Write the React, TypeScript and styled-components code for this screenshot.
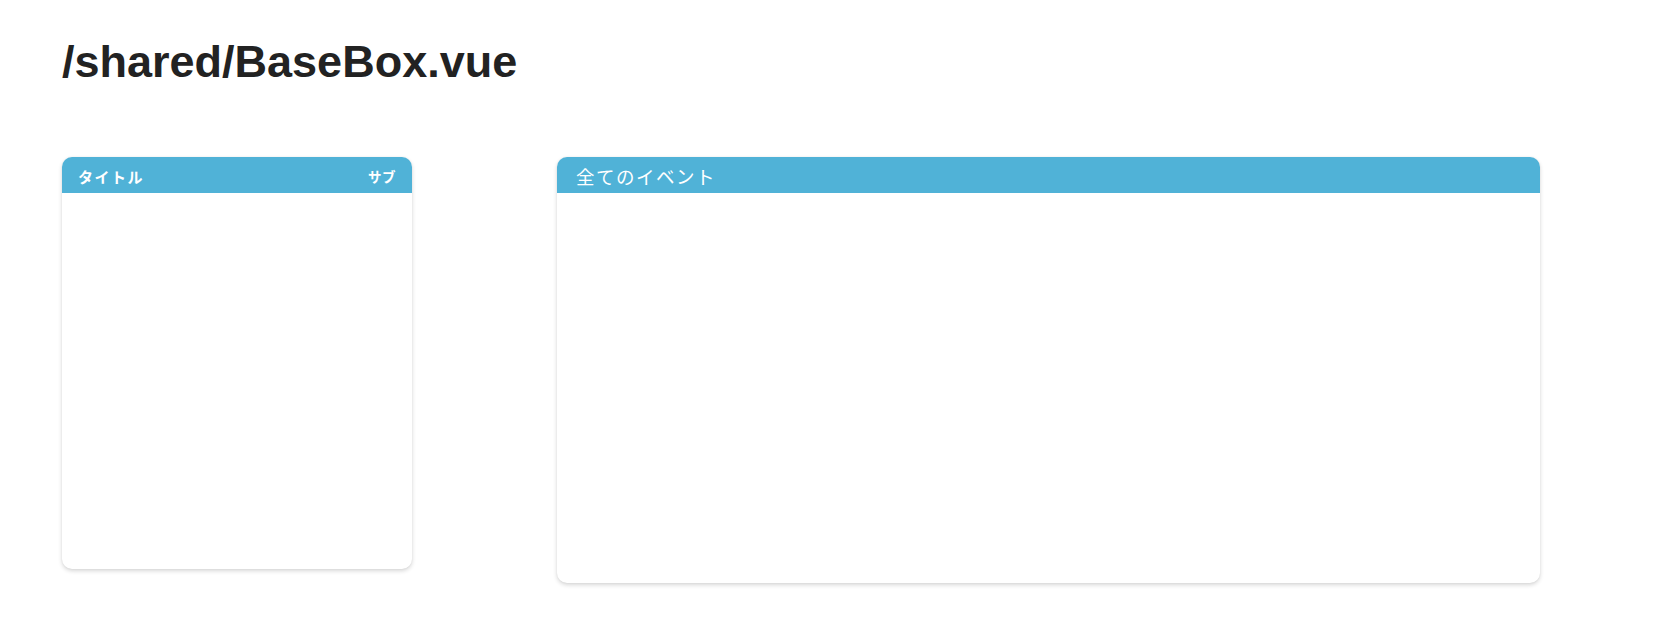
import React from "react";
import styled, { createGlobalStyle } from "styled-components";

const GlobalStyle = createGlobalStyle`
  html, body {
    margin: 0;
    padding: 0;
    background: #ffffff;
  }
  body {
    font-family: "Liberation Sans", "Noto Sans CJK JP", Arial, sans-serif;
  }
`;

const Page = styled.main`
  padding: 36px 62px 40px 62px;
`;

const Title = styled.h1`
  margin: 0;
  font-family: "Liberation Sans", Arial, sans-serif;
  font-size: 45px;
  font-weight: 700;
  color: #222222;
  line-height: normal;
`;

const Row = styled.div`
  display: flex;
  align-items: flex-start;
  gap: 145px;
  margin-top: 69px;
`;

const Box = styled.section<{ $width: number; $height: number }>`
  width: ${(p) => p.$width}px;
  height: ${(p) => p.$height}px;
  background: #ffffff;
  border-radius: 10px;
  box-shadow: 0 2px 4px rgba(0, 0, 0, 0.16), 0 0 2px rgba(0, 0, 0, 0.06);
  overflow: hidden;
  display: flex;
  flex-direction: column;
`;

const Header = styled.header<{ $padX: number }>`
  height: 36px;
  box-sizing: border-box;
  padding: 3px ${(p) => p.$padX}px 0;
  flex: none;
  background: #50b2d7;
  color: #ffffff;
  display: flex;
  align-items: center;
  justify-content: space-between;
  font-family: "Noto Sans CJK JP", "Liberation Sans", sans-serif;
`;

const HeadTitle = styled.span<{ $bold?: boolean; $size: number; $spacing: number }>`
  font-size: ${(p) => p.$size}px;
  font-weight: ${(p) => (p.$bold ? 700 : 400)};
  letter-spacing: ${(p) => p.$spacing}px;
  line-height: 1;
`;

const Body = styled.div`
  flex: 1;
`;

export default function App() {
  return (
    <>
      <GlobalStyle />
      <Page>
        <Title>/shared/BaseBox.vue</Title>
        <Row>
          <Box $width={350} $height={412}>
            <Header $padX={16}>
              <HeadTitle $bold $size={15} $spacing={1.5}>
                タイトル
              </HeadTitle>
              <HeadTitle $bold $size={13.5} $spacing={0.5}>
                サブ
              </HeadTitle>
            </Header>
            <Body />
          </Box>
          <Box $width={983} $height={426}>
            <Header $padX={19}>
              <HeadTitle $size={18.5} $spacing={1.5}>
                全てのイベント
              </HeadTitle>
            </Header>
            <Body />
          </Box>
        </Row>
      </Page>
    </>
  );
}
